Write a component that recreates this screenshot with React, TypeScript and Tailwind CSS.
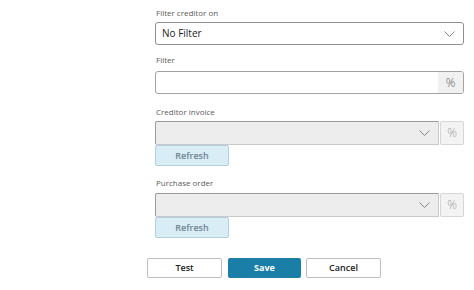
import React from 'react'

const font = { fontFamily: '"Open Sans", "Noto Sans", sans-serif' }

function Chevron({ className }: { className?: string }) {
  return (
    <svg width="11" height="6" viewBox="0 0 11 6" className={className} fill="none">
      <path d="M0.5 0.5 L5.5 5.5 L10.5 0.5" stroke="currentColor" strokeWidth="0.9" />
    </svg>
  )
}

function Label({ children, className = '' }: { children: React.ReactNode; className?: string }) {
  return <div className={`h-[12px] text-[8px] leading-[12px] text-[#5a5a5a] pl-px ${className}`}>{children}</div>
}

function LookupField() {
  return (
    <>
      <div className="flex h-[24px] gap-px">
        <div className="flex-1 flex items-center justify-end pr-[8px] bg-[#ededed] border border-[#9a9a9a] border-b-[#c9c9c9] border-r-[#c9c9c9] rounded-l-[2px]">
          <Chevron className="text-[#777]" />
        </div>
        <div className="w-[24px] flex items-center justify-center bg-[#f3f3f3] border border-[#d6d6d6] rounded-[2px] text-[12px] font-light text-[#999]">
          %
        </div>
      </div>
      <div className="w-[74px] h-[21px] flex items-center justify-center bg-[#d9edf6] border border-[#b3cfdc] rounded-[2px] text-[9px] font-semibold text-[#6d8491]">
        Refresh
      </div>
    </>
  )
}

export default function App() {
  return (
    <div className="w-[474px] h-[290px] bg-white overflow-hidden" style={font}>
      <div className="ml-[155px] w-[309px] pt-[7px] flex flex-col">
        <Label className="mb-[3px]">Filter creditor on</Label>
        <div className="h-[23px] flex items-center justify-between pl-[6px] pr-[8px] border border-[#8f8f8f] rounded-[3px] text-[10px] text-[#222]">
          <span>No Filter</span>
          <Chevron className="text-[#777]" />
        </div>

        <Label className="mt-[9px] mb-[5px]">Filter</Label>
        <div className="h-[23px] flex border border-[#a3a3a3] rounded-[3px] overflow-hidden">
          <div className="flex-1" />
          <div className="w-[25px] flex items-center justify-center bg-[#f1f1f1] text-[12px] font-light text-[#555]">%</div>
        </div>

        <Label className="mt-[12px] mb-[3px]">Creditor invoice</Label>
        <LookupField />

        <Label className="mt-[11px] mb-[4px]">Purchase order</Label>
        <LookupField />
      </div>

      <div className="ml-[147px] mt-[20px] flex">
        <button className="w-[75px] h-[20px] bg-white border border-[#bdbdbd] rounded-[2px] text-[9px] font-semibold text-[#222]">
          Test
        </button>
        <button className="ml-[6px] w-[73px] h-[20px] bg-[#1b7ea6] rounded-[2px] text-[9px] font-bold text-white">
          Save
        </button>
        <button className="ml-[5px] w-[75px] h-[20px] bg-white border border-[#bdbdbd] rounded-[2px] text-[9px] font-semibold text-[#222]">
          Cancel
        </button>
      </div>
    </div>
  )
}
